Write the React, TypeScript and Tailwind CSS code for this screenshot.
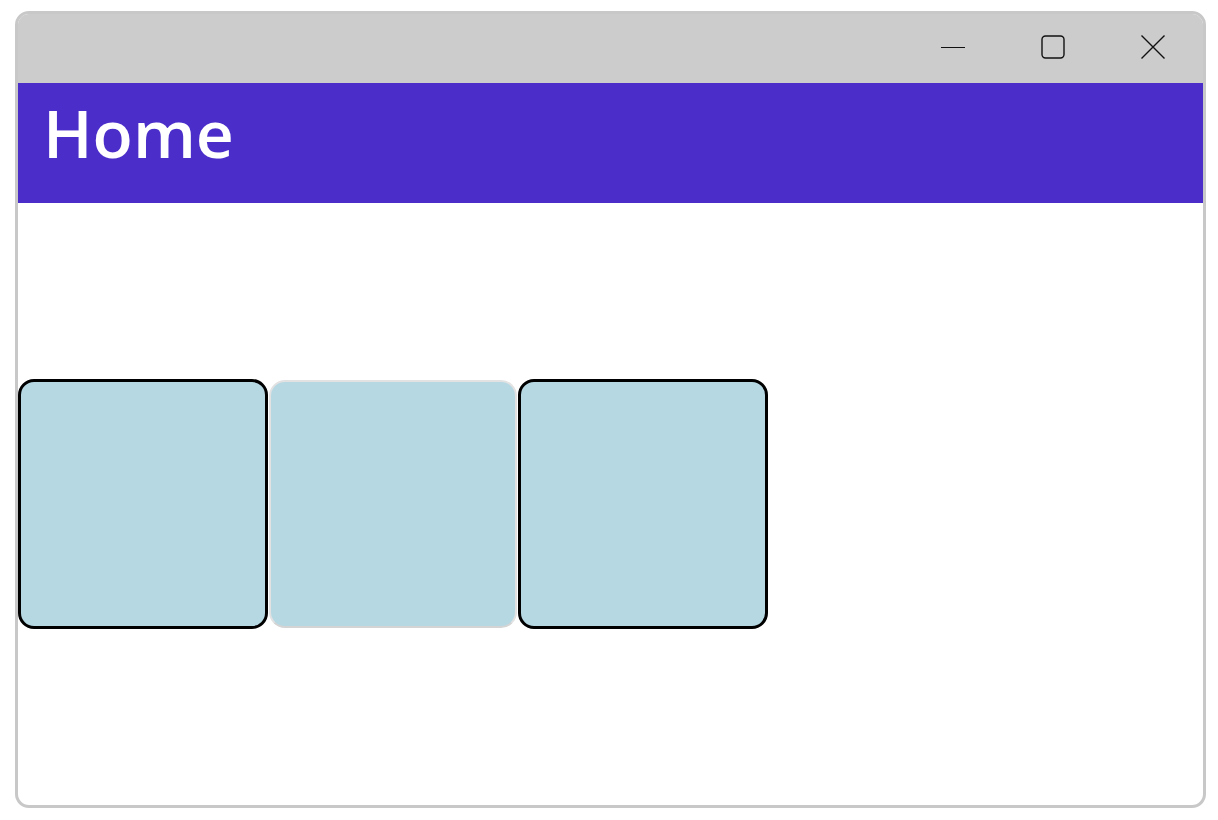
export default function App() {
  return (
    <div className="h-[820px] w-[1218px] bg-white pl-[15px] pr-[12px] pt-[11px] pb-[12px]">
      <div className="flex h-full w-full flex-col overflow-hidden rounded-[14px] border-[3px] border-[#c8c8c8] bg-white">
        <div className="-mt-[3px] flex h-[72px] shrink-0 items-center justify-end bg-[#cccccc]">
          <button className="flex h-full w-[100px] items-center justify-center">
            <svg width="24" height="24" viewBox="0 0 24 24">
              <path d="M0 12.5 H24" stroke="#111" strokeWidth="1.2" />
            </svg>
          </button>
          <button className="flex h-full w-[100px] items-center justify-center">
            <svg width="24" height="24" viewBox="0 0 24 24">
              <rect x="1" y="1" width="22" height="22" rx="3.5" fill="none" stroke="#111" strokeWidth="1.4" />
            </svg>
          </button>
          <button className="flex h-full w-[100px] items-center justify-center">
            <svg width="24" height="24" viewBox="0 0 24 24">
              <path d="M0.5 0.5 L23.5 23.5 M23.5 0.5 L0.5 23.5" stroke="#111" strokeWidth="1.4" />
            </svg>
          </button>
        </div>
        <div className="h-[120px] shrink-0 bg-[#4b2dca] px-[25px] pt-[16px]">
          <h1 className="font-['Open_Sans',sans-serif] text-[66px] font-semibold leading-none text-white">Home</h1>
        </div>
        <div className="flex flex-1 items-center">
          <div className="h-[250px] w-[250px] rounded-[16px] border-[3px] border-black bg-[#b6d8e3]" />
          <div className="m-px h-[248px] w-[248px] rounded-[16px] border-2 border-[#e2e2e2] border-b-[#d4d4d4] bg-[#b6d8e3]" />
          <div className="h-[250px] w-[250px] rounded-[16px] border-[3px] border-black bg-[#b6d8e3]" />
        </div>
      </div>
    </div>
  )
}
